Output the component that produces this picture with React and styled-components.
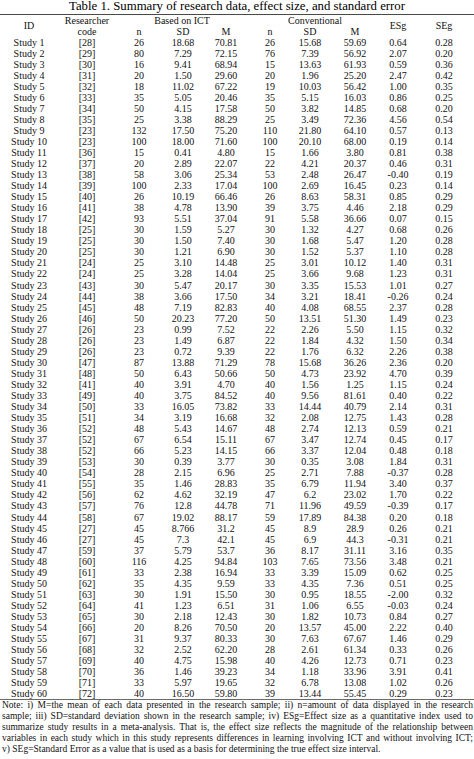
import React from 'react'
import styled, { createGlobalStyle } from 'styled-components'

const GlobalStyle = createGlobalStyle`
  html, body {
    margin: 0;
    padding: 0;
    background: #fff;
  }
  body {
    font-family: "Liberation Serif", "Times New Roman", serif;
    color: #111;
  }
`

const raw = `
1 [28] 26 18.68 70.81 26 15.68 59.69 0.64 0.28
2 [29] 80 7.29 72.15 76 7.39 56.92 2.07 0.20
3 [30] 16 9.41 68.94 15 13.63 61.93 0.59 0.36
4 [31] 20 1.50 29.60 20 1.96 25.20 2.47 0.42
5 [32] 18 11.02 67.22 19 10.03 56.42 1.00 0.35
6 [33] 35 5.05 20.46 35 5.15 16.03 0.86 0.25
7 [34] 50 4.15 17.58 50 3.82 14.85 0.68 0.20
8 [35] 25 3.38 88.29 25 3.49 72.36 4.56 0.54
9 [23] 132 17.50 75.20 110 21.80 64.10 0.57 0.13
10 [23] 100 18.00 71.60 100 20.10 68.00 0.19 0.14
11 [36] 15 0.41 4.80 15 1.66 3.80 0.81 0.38
12 [37] 20 2.89 22.07 22 4.21 20.37 0.46 0.31
13 [38] 58 3.06 25.34 53 2.48 26.47 -0.40 0.19
14 [39] 100 2.33 17.04 100 2.69 16.45 0.23 0.14
15 [40] 26 10.19 66.46 26 8.63 58.31 0.85 0.29
16 [41] 38 4.78 13.90 39 3.75 4.46 2.18 0.29
17 [42] 93 5.51 37.04 91 5.58 36.66 0.07 0.15
18 [25] 30 1.59 5.27 30 1.32 4.27 0.68 0.26
19 [25] 30 1.50 7.40 30 1.68 5.47 1.20 0.28
20 [25] 30 1.21 6.90 30 1.52 5.37 1.10 0.28
21 [24] 25 3.10 14.48 25 3.01 10.12 1.40 0.31
22 [24] 25 3.28 14.04 25 3.66 9.68 1.23 0.31
23 [43] 30 5.47 20.17 30 3.35 15.53 1.01 0.27
24 [44] 38 3.66 17.50 34 3.21 18.41 -0.26 0.24
25 [45] 48 7.19 82.83 40 4.08 68.55 2.37 0.28
26 [46] 50 20.23 77.20 50 13.51 51.30 1.49 0.23
27 [26] 23 0.99 7.52 22 2.26 5.50 1.15 0.32
28 [26] 23 1.49 6.87 22 1.84 4.32 1.50 0.34
29 [26] 23 0.72 9.39 22 1.76 6.32 2.26 0.38
30 [47] 87 13.88 71.29 78 15.68 36.26 2.36 0.20
31 [48] 50 6.43 50.66 50 4.73 23.92 4.70 0.39
32 [41] 40 3.91 4.70 40 1.56 1.25 1.15 0.24
33 [49] 40 3.75 84.52 40 9.56 81.61 0.40 0.22
34 [50] 33 16.05 73.82 33 14.44 40.79 2.14 0.31
35 [51] 34 3.19 16.68 32 2.08 12.75 1.43 0.28
36 [52] 48 5.43 14.67 48 2.74 12.13 0.59 0.21
37 [52] 67 6.54 15.11 67 3.47 12.74 0.45 0.17
38 [52] 66 5.23 14.15 66 3.37 12.04 0.48 0.18
39 [53] 30 0.39 3.77 30 0.35 3.08 1.84 0.31
40 [54] 28 2.15 6.96 25 2.71 7.88 -0.37 0.28
41 [55] 35 1.46 28.83 35 6.79 11.94 3.40 0.37
42 [56] 62 4.62 32.19 47 6.2 23.02 1.70 0.22
43 [57] 76 12.8 44.78 71 11.96 49.59 -0.39 0.17
44 [58] 67 19.02 88.17 59 17.89 84.38 0.20 0.18
45 [27] 45 8.766 31.2 45 8.9 28.9 0.26 0.21
46 [27] 45 7.3 42.1 45 6.9 44.3 -0.31 0.21
47 [59] 37 5.79 53.7 36 8.17 31.11 3.16 0.35
48 [60] 116 4.25 94.84 103 7.65 73.56 3.48 0.21
49 [61] 33 2.38 16.94 33 3.39 15.09 0.62 0.25
50 [62] 35 4.35 9.59 33 4.35 7.36 0.51 0.25
51 [63] 30 1.91 15.50 30 0.95 18.55 -2.00 0.32
52 [64] 41 1.23 6.51 31 1.06 6.55 -0.03 0.24
53 [65] 30 2.18 12.43 30 1.82 10.73 0.84 0.27
54 [66] 20 8.26 70.50 20 13.57 45.00 2.22 0.40
55 [67] 31 9.37 80.33 30 7.63 67.67 1.46 0.29
56 [68] 32 2.52 62.20 28 2.61 61.34 0.33 0.26
57 [69] 40 4.75 15.98 40 4.26 12.73 0.71 0.23
58 [70] 36 1.46 39.23 34 1.18 33.96 3.91 0.41
59 [71] 33 5.97 19.65 32 6.78 13.08 1.02 0.26
60 [72] 40 16.50 59.80 39 13.44 55.45 0.29 0.23
`

const rows = raw.trim().split('\n').map((line) => {
  const [num, ...rest] = line.trim().split(/\s+/)
  return ['Study ' + num, ...rest]
})

const colWidths = [58, 58, 46, 42, 44, 44, 36, 54, 32, 60]

const noteLines = [
  'Note: i) M=the mean of each data presented in the research sample; ii) n=amount of data displayed in the research',
  'sample; iii) SD=standard deviation shown in the research sample; iv) ESg=Effect size as a quantitative index used to',
  'summarize study results in a meta-analysis. That is, the effect size reflects the magnitude of the relationship between',
  'variables in each study which in this study represents differences in learning involving ICT and without involving ICT;',
  'v) SEg=Standard Error as a value that is used as a basis for determining the true effect size interval.',
]

function App() {
  return (
    <Page>
      <GlobalStyle />
      <Title>Table 1. Summary of research data, effect size, and standard error</Title>
      <Table>
        <colgroup>
          {colWidths.map((w, i) => (
            <col key={i} style={{ width: w }} />
          ))}
        </colgroup>
        <thead>
          <tr>
            <Th rowSpan={2} $mid>ID</Th>
            <Th>Researcher</Th>
            <Th colSpan={3}>Based on ICT</Th>
            <Th colSpan={3}>Conventional</Th>
            <Th rowSpan={2} $mid>ESg</Th>
            <Th rowSpan={2} $mid>SEg</Th>
          </tr>
          <tr>
            <Th>code</Th>
            <Th>n</Th>
            <Th>SD</Th>
            <Th>M</Th>
            <Th>n</Th>
            <Th>SD</Th>
            <Th>M</Th>
          </tr>
        </thead>
        <tbody>
          {rows.map((r) => (
            <tr key={r[0]}>
              {r.map((cell, j) => (
                <Td key={j}>{cell}</Td>
              ))}
            </tr>
          ))}
        </tbody>
      </Table>
      <Note>
        {noteLines.map((t, i) => (
          <NoteLine key={i} $last={i === noteLines.length - 1}>
            {t}
          </NoteLine>
        ))}
      </Note>
    </Page>
  )
}

export default App

const Page = styled.div`
  width: 474px;
  display: flex;
  flex-direction: column;
`

const Title = styled.div`
  font-size: 12.8px;
  line-height: 13.5px;
  text-align: center;
  color: #000;
  white-space: nowrap;
`

const Table = styled.table`
  width: 474px;
  table-layout: fixed;
  border-collapse: collapse;
  border-top: 1.6px solid #4a4a4a;
  border-bottom: 1.8px solid #6a6a6a;
  font-size: 10px;
  color: #111;
`

const Th = styled.th`
  font-weight: normal;
  text-align: center;
  padding: 0;
  height: 11px;
  line-height: 11px;
  white-space: nowrap;
  vertical-align: ${(p) => (p.$mid ? 'middle' : 'bottom')};
`

const Td = styled.td`
  text-align: center;
  padding: 0;
  height: 11.05px;
  line-height: 11.05px;
  white-space: nowrap;
`

const Note = styled.div`
  padding: 0 1px 0 2px;
  font-size: 9.5px;
  line-height: 11px;
  color: #111;
`

const NoteLine = styled.div`
  text-align: ${(p) => (p.$last ? 'left' : 'justify')};
  text-align-last: ${(p) => (p.$last ? 'left' : 'justify')};
  white-space: nowrap;
`
